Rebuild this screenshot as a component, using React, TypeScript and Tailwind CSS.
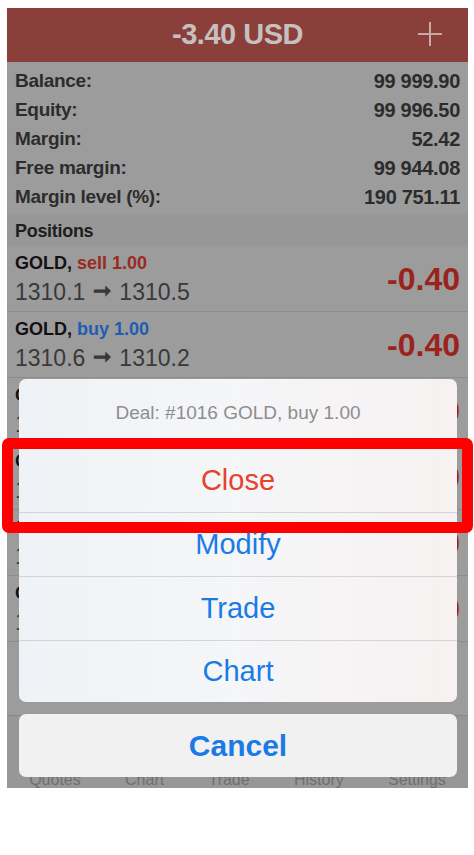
import React from "react";

const font = { fontFamily: '"Liberation Sans", Arial, sans-serif' };

function StatRow({ label, value }: { label: string; value: string }) {
  return (
    <div className="flex h-[29px] items-center justify-between px-[8px] font-bold leading-none text-[#2c2c2c]">
      <span className="text-[19px] tracking-[-0.3px]">{label}</span>
      <span className="text-[20px] tracking-[-0.3px]">{value}</span>
    </div>
  );
}

function PositionRow({ side, from, to }: { side: "sell" | "buy"; from: string; to: string }) {
  return (
    <div className="flex h-[66px] items-center justify-between border-b border-[#8c8c8c] px-[8px]">
      <div className="flex flex-col">
        <div className="h-[20px] text-[18px] font-bold leading-[20px] text-[#111]">
          GOLD,{" "}
          <span className={side === "sell" ? "text-[#9a2a22]" : "text-[#1f5db2]"}>
            {side} 1.00
          </span>
        </div>
        <div className="mt-[6px] flex h-[26px] items-center gap-[8px] text-[23px] leading-[26px] text-[#393939]">
          <span>{from}</span>
          <span className="relative -top-[1px] text-[22px] font-bold leading-none">➞</span>
          <span>{to}</span>
        </div>
      </div>
      <div className="text-[32px] font-bold leading-none text-[#9a241c]">-0.40</div>
    </div>
  );
}

export default function App() {
  return (
    <div className="relative h-[855px] w-[474px] overflow-hidden bg-white" style={font}>
      <div className="relative ml-[7px] mt-[8px] flex h-[780px] w-[461px] flex-col overflow-hidden bg-[#9c9c9c]">
        {/* header */}
        <div className="relative flex h-[54px] shrink-0 items-center justify-center bg-[#8b3f3a]">
          <span className="text-[29px] font-bold tracking-[-0.5px] text-[#c6c1c0]">-3.40 USD</span>
          <svg
            className="absolute right-[25px] top-[13px]"
            width="26"
            height="26"
            viewBox="0 0 26 26"
          >
            <path d="M13 1V25M1 13H25" stroke="#c9a9a6" strokeWidth="2" />
          </svg>
        </div>
        {/* stats */}
        <div className="pt-[4px]">
          <StatRow label="Balance:" value="99 999.90" />
          <StatRow label="Equity:" value="99 996.50" />
          <StatRow label="Margin:" value="52.42" />
          <StatRow label="Free margin:" value="99 944.08" />
          <StatRow label="Margin level (%):" value="190 751.11" />
        </div>
        <div className="mt-[3px] flex h-[32px] items-center bg-[#979797] px-[8px] pt-[3px] text-[18px] font-bold tracking-[-0.3px] text-[#1e1e1e]">
          Positions
        </div>
        <PositionRow side="sell" from="1310.1" to="1310.5" />
        <PositionRow side="buy" from="1310.6" to="1310.2" />
        <PositionRow side="buy" from="1310.6" to="1310.2" />
        <PositionRow side="buy" from="1310.6" to="1310.2" />
        <PositionRow side="buy" from="1310.6" to="1310.2" />
        <PositionRow side="buy" from="1310.6" to="1310.2" />
        {/* tab bar */}
        <div className="absolute bottom-0 left-0 right-0 flex h-[73px] items-end justify-around border-t border-[#888] bg-[#979797] text-[16px] leading-[18px] text-[#6f6f6f]">
          <span className="-mb-[1px]">Quotes</span>
          <span className="-mb-[1px]">Chart</span>
          <span className="-mb-[1px]">Trade</span>
          <span className="-mb-[1px]">History</span>
          <span className="-mb-[1px]">Settings</span>
        </div>

        {/* action sheet */}
        <div className="absolute left-[12px] right-[11px] top-[371px] flex flex-col gap-[12px]">
          <div className="flex flex-col overflow-hidden rounded-[7px] bg-gradient-to-r from-[#eff2f6] via-[#f5f6f8] to-[#f7f1f1]">
            <div className="flex h-[69px] items-center justify-center text-[19px] text-[#8e8e8e]">
              Deal: #1016 GOLD, buy 1.00
            </div>
            <div className="flex h-[64px] items-center justify-center border-t border-[#d3d4d7] text-[29px] text-[#e8412c]">
              Close
            </div>
            <div className="flex h-[64px] items-center justify-center border-t border-[#d3d4d7] text-[29px] text-[#1b7be6]">
              Modify
            </div>
            <div className="flex h-[64px] items-center justify-center border-t border-[#d3d4d7] text-[29px] text-[#1b7be6]">
              Trade
            </div>
            <div className="flex h-[62px] items-center justify-center border-t border-[#d3d4d7] text-[29px] text-[#1b7be6]">
              Chart
            </div>
          </div>
          <div className="flex h-[63px] items-center justify-center rounded-[7px] bg-[#f1f1f2] text-[30px] font-bold text-[#1b7be6]">
            Cancel
          </div>
        </div>
      </div>

      {/* red highlight */}
      <div className="absolute left-[2px] top-[438px] h-[95px] w-[471px] rounded-[7px] border-[11px] border-[#ff0000]" />
    </div>
  );
}
